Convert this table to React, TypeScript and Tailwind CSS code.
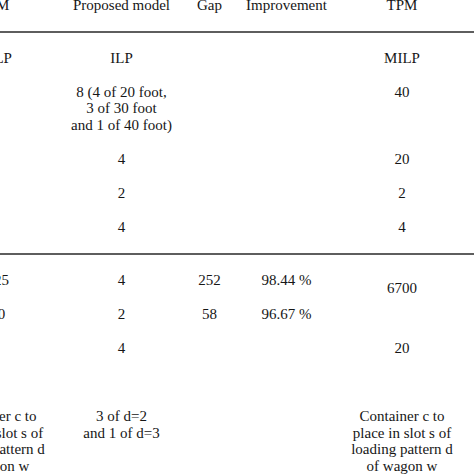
import React from "react";

const COLS = "grid grid-cols-[120px_135px_41px_113px_118px] ml-[-66px] w-[527px] text-center";

function Row({ cells, className = "" }: { cells: React.ReactNode[]; className?: string }) {
  return (
    <div className={`${COLS} ${className}`}>
      {cells.map((c, i) => (
        <div key={i} className="whitespace-nowrap">
          {c}
        </div>
      ))}
    </div>
  );
}

function Rule({ className = "" }: { className?: string }) {
  return <div className={`h-[2px] w-full bg-[#5e5e5e] ${className}`} />;
}

const bottomText = (
  <>
    Container c to
    <br />
    place in slot s of
    <br />
    loading pattern d
    <br />
    of wagon w
  </>
);

export default function App() {
  return (
    <div className="w-[474px] h-[474px] overflow-hidden bg-white font-['Liberation_Serif',serif] text-[15px] leading-[16.5px] text-[#161616]">
      <Row className="mt-[-3px]" cells={["TPM", "Proposed model", "Gap", "Improvement", "TPM"]} />
      <Rule className="mt-[17.5px]" />

      <div className="pt-[16.7px] flex flex-col gap-y-[17.5px]">
        <Row cells={["MILP", "ILP", "", "", "MILP"]} />
        <Row
          cells={[
            "",
            <>
              8 (4 of 20 foot,
              <br />
              3 of 30 foot
              <br />
              and 1 of 40 foot)
            </>,
            "",
            "",
            "40",
          ]}
        />
        <Row cells={["", "4", "", "", "20"]} />
        <Row cells={["", "2", "", "", "2"]} />
        <Row cells={["", "4", "", "", "4"]} />
      </div>

      <Rule className="mt-[17.8px]" />

      <div className={`${COLS} pt-[16.7px] gap-y-[17.5px]`}>
        <div>1225</div>
        <div>4</div>
        <div>252</div>
        <div>98.44 %</div>
        <div className="row-span-2 pt-[8px]">6700</div>
        <div>120</div>
        <div>2</div>
        <div>58</div>
        <div>96.67 %</div>
        <div></div>
        <div>4</div>
        <div></div>
        <div></div>
        <div>20</div>
      </div>

      <Row className="mt-[52px]" cells={[bottomText, <>3 of d=2<br />and 1 of d=3</>, "", "", bottomText]} />
    </div>
  );
}
